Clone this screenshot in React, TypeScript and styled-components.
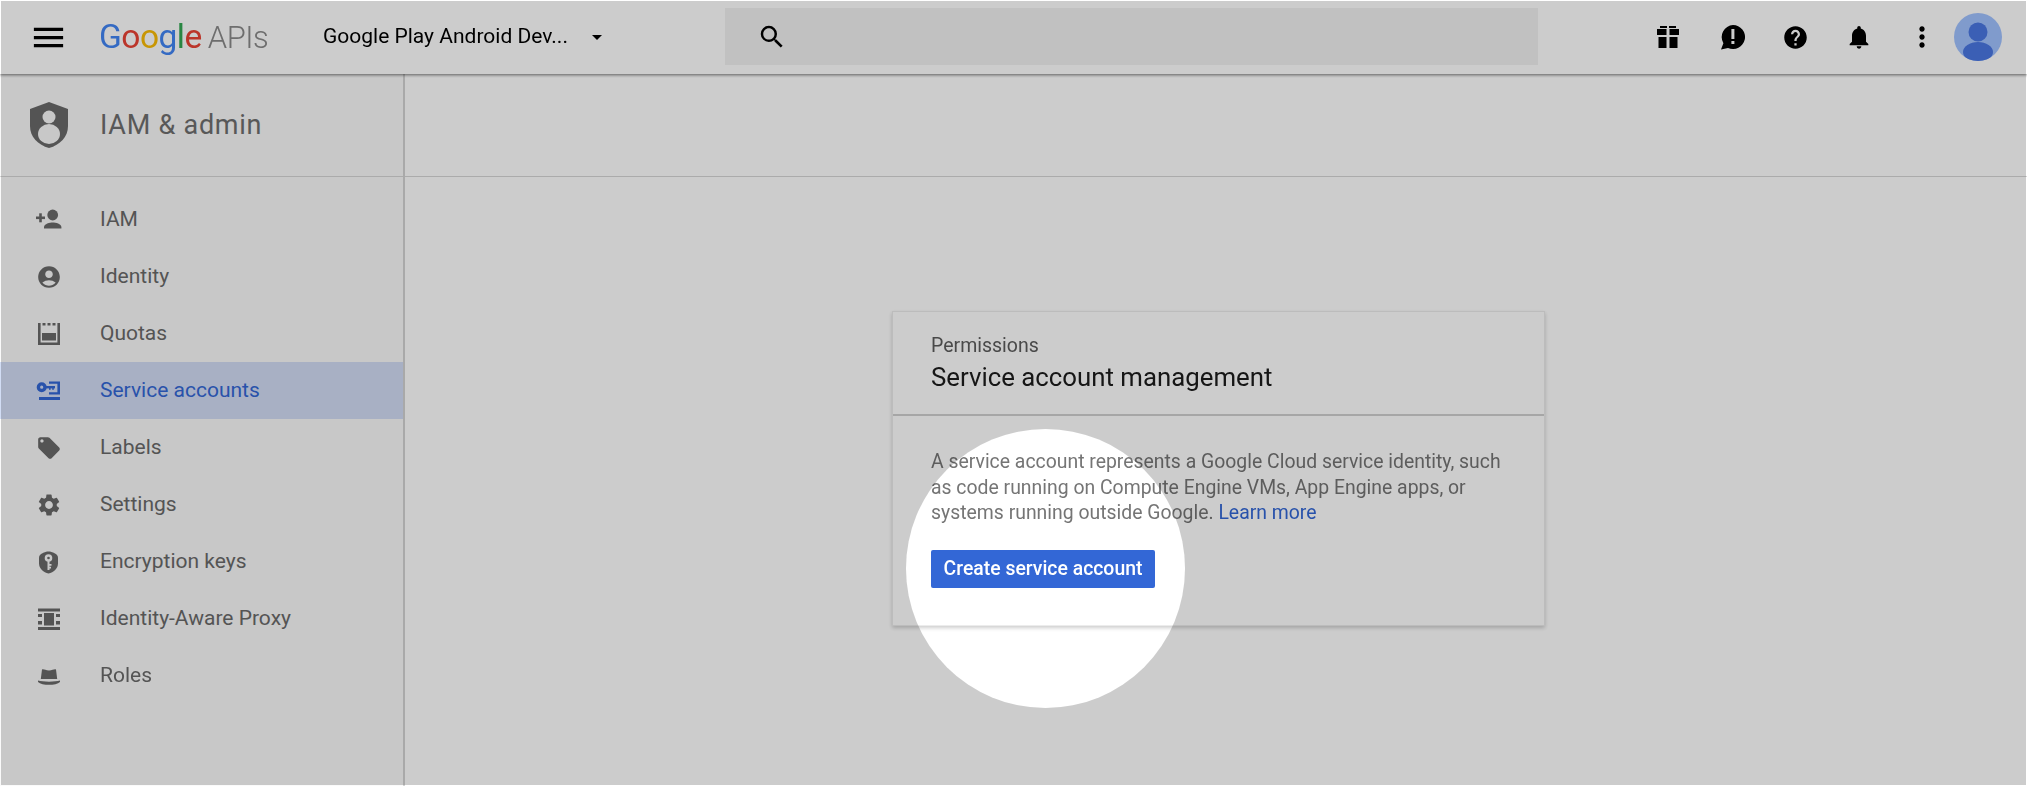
import React from "react";
import styled, { createGlobalStyle } from "styled-components";
import {
  MdAccountCircle,
  MdArrowDropDown,
  MdHelp,
  MdLocalOffer,
  MdMenu,
  MdMoreVert,
  MdNotifications,
  MdSearch,
  MdSettings,
} from "react-icons/md";

const GlobalStyle = createGlobalStyle`
  html, body {
    margin: 0;
    padding: 0;
    background: #fff;
  }
  body {
    font-family: Roboto, "Liberation Sans", sans-serif;
    overflow: hidden;
  }
`;

const Page = styled.div`
  position: relative;
  width: 2027px;
  height: 786px;
  display: flex;
  flex-direction: column;
  overflow: hidden;
  filter: blur(0.4px);
`;

const TopBar = styled.header`
  position: relative;
  z-index: 1;
  height: 74px;
  flex: none;
  display: flex;
  align-items: center;
  background: #fff;
  box-shadow: 0 1px 3px rgba(0, 0, 0, 0.55);
  padding-right: 25px;
`;

const MenuButton = styled.div`
  display: flex;
  margin-left: 29px;
  color: #000;
`;

const Logo = styled.div`
  margin-left: 31px;
  margin-top: -2px;
  width: 224px;
  font-size: 33.5px;
  letter-spacing: -0.5px;
  white-space: nowrap;
  font-weight: 400;
`;

const LogoLetter = styled.span<{ $color: string }>`
  color: ${(p) => p.$color};
`;

const LogoSuffix = styled.span`
  margin-left: 6px;
  font-size: 31px;
  font-weight: 300;
  color: #8a8a8a;
`;

const ProjectName = styled.div`
  width: 262px;
  margin-top: -2px;
  font-size: 21px;
  color: #000;
  white-space: nowrap;
`;

const Caret = styled.div`
  display: flex;
  width: 140px;
  color: #000;
`;

const SearchBox = styled.div`
  width: 813px;
  height: 57px;
  display: flex;
  align-items: center;
  padding-left: 32px;
  box-sizing: border-box;
  background: #f2f2f2;
  color: #000;
  margin-top: -1px;
`;

const Actions = styled.div`
  margin-left: auto;
  display: flex;
  align-items: center;
`;

const ActionIcon = styled.div`
  width: 63.5px;
  display: flex;
  justify-content: center;
  color: #000;
`;

const Avatar = styled.div`
  width: 48px;
  height: 48px;
  border-radius: 50%;
  overflow: hidden;
  background: #a1c2ff;
  margin-top: -1px;
  svg {
    display: block;
  }
`;

const Body = styled.div`
  flex: 1;
  display: flex;
  min-height: 0;
`;

const Sidebar = styled.aside`
  width: 405px;
  flex: none;
  box-sizing: border-box;
  background: #fafafa;
  border-right: 2px solid #d4d4d4;
`;

const SidebarHead = styled.div`
  height: 103px;
  box-sizing: border-box;
  display: flex;
  align-items: center;
  padding-left: 30px;
  border-bottom: 1px solid #d6d6d6;
  color: #6b6b6b;
`;

const SidebarTitle = styled.div`
  margin-left: 32px;
  font-size: 27px;
  letter-spacing: 0.75px;
  color: #6f6f6f;
`;

const NavList = styled.nav`
  padding-top: 14px;
`;

const NavItem = styled.div<{ $active?: boolean }>`
  height: 57px;
  display: flex;
  align-items: center;
  padding-left: 36px;
  font-size: 21px;
  color: ${(p) => (p.$active ? "#3367d6" : "#6a6a6a")};
  background: ${(p) => (p.$active ? "#d2ddf5" : "transparent")};
`;

const NavIcon = styled.span`
  width: 64px;
  flex: none;
  display: flex;
`;

const NavLabel = styled.span`
  margin-top: -2px;
`;

const Content = styled.main`
  flex: 1;
  display: flex;
  flex-direction: column;
`;

const ContentHead = styled.div`
  height: 103px;
  flex: none;
  box-sizing: border-box;
  border-bottom: 1px solid #d6d6d6;
`;

const ContentBody = styled.div`
  flex: 1;
  padding: 134px 0 0 487px;
`;

const Card = styled.section`
  width: 653px;
  height: 315px;
  box-sizing: border-box;
  background: #fff;
  border: 1px solid #ececec;
  box-shadow: 0 2px 4px rgba(0, 0, 0, 0.2);
`;

const CardHead = styled.div`
  height: 104px;
  box-sizing: border-box;
  padding: 24px 38px 0;
  border-bottom: 2px solid #d0d0d0;
`;

const Eyebrow = styled.div`
  font-size: 19.5px;
  line-height: 20px;
  color: #5c5c5c;
`;

const CardTitle = styled.div`
  margin-top: 6px;
  font-size: 25.8px;
  line-height: 30px;
  color: #1c1c1c;
`;

const CardBody = styled.div`
  padding: 33px 38px 0;
`;

const Description = styled.p`
  margin: 0;
  font-size: 19.4px;
  line-height: 25.5px;
  color: #757575;
`;

const LearnMore = styled.a`
  color: #3367d6;
  text-decoration: none;
`;

const PrimaryButton = styled.button`
  display: block;
  margin-top: 24px;
  width: 224px;
  height: 38px;
  padding: 0;
  border: 0;
  border-radius: 2px;
  background: #3367d6;
  color: #fff;
  font: 500 19.4px Roboto, sans-serif;
`;

const Scrim = styled.div`
  position: absolute;
  inset: 1px;
  z-index: 2;
  overflow: hidden;
  pointer-events: none;
`;

const Spotlight = styled.div`
  position: absolute;
  left: 905px;
  top: 428px;
  width: 279px;
  height: 279px;
  border-radius: 50%;
  box-shadow: 0 0 0 3000px rgba(0, 0, 0, 0.2);
`;

const Glyph = ({ children }: { children: React.ReactNode }) => (
  <svg width="26" height="26" viewBox="0 0 26 26" fill="currentColor">
    {children}
  </svg>
);

const items: { label: string; icon: React.ReactNode; active?: boolean }[] = [
  {
    label: "IAM",
    icon: (
      <Glyph>
        <rect x="0" y="9.5" width="9" height="2.6" />
        <rect x="3.2" y="6.3" width="2.6" height="9" />
        <circle cx="16.7" cy="8" r="5.4" />
        <path d="M8 21.5V20c0-3.2 5.8-4.6 8.7-4.6s8.7 1.4 8.7 4.6v1.5z" />
      </Glyph>
    ),
  },
  { label: "Identity", icon: <MdAccountCircle size={26} /> },
  {
    label: "Quotas",
    icon: (
      <Glyph>
        <path d="M2 2h2.6v19.4h16.8V2H24v22H2z" />
        <rect x="6.5" y="2" width="3" height="2.5" />
        <rect x="11.5" y="2" width="3" height="2.5" />
        <rect x="16.5" y="2" width="3" height="2.5" />
        <rect x="6" y="12" width="14" height="7.5" />
      </Glyph>
    ),
  },
  {
    label: "Service accounts",
    active: true,
    icon: (
      <Glyph>
        <path
          fillRule="evenodd"
          d="M5.7 4.2a5 5 0 1 1 0 10 5 5 0 0 1 0-10zm0 3.4a1.6 1.6 0 1 0 0 3.2 1.6 1.6 0 0 0 0-3.2z"
        />
        <rect x="10" y="8" width="9" height="2.4" />
        <rect x="13" y="10" width="1.6" height="1.8" />
        <rect x="16.2" y="10" width="1.6" height="1.8" />
        <path d="M13 3.5h11v13H13v-2.2h8.4V5.7H13z" />
        <rect x="3" y="19" width="21" height="3" />
      </Glyph>
    ),
  },
  { label: "Labels", icon: <MdLocalOffer size={26} /> },
  { label: "Settings", icon: <MdSettings size={26} /> },
  {
    label: "Encryption keys",
    icon: (
      <Glyph>
        <path d="M12.500 2.500c3.500 0 9.500 2.500 9.500 6v6c0 5-4.500 9-9.500 10-5-1-9.500-5-9.500-10v-6c0-3.500 6-6 9.500-6z" />
        <circle cx="12.500" cy="9" r="3.800" fill="#fafafa" />
        <circle cx="12.500" cy="9" r="1.300" />
        <path d="M11.500 12h2v3h2v1.800h-2v1h1.500v1.800h-1.500v1.400h-2z" fill="#fafafa" />
      </Glyph>
    ),
  },
  {
    label: "Identity-Aware Proxy",
    icon: (
      <Glyph>
        <rect x="2" y="2.500" width="22" height="3" />
        <rect x="2" y="21" width="22" height="3" />
        <rect x="8" y="7" width="10" height="12.500" />
        <rect x="2" y="8" width="4" height="3" />
        <rect x="2" y="15" width="4" height="3.500" />
        <rect x="20" y="8" width="4" height="3" />
        <rect x="20" y="15" width="4" height="3.500" />
      </Glyph>
    ),
  },
  {
    label: "Roles",
    icon: (
      <Glyph>
        <path d="M6 6.500c2-.6 3.500 1 7 1s5-1.600 7-1l1.200 9.500H4.800z" />
        <path d="M2 17.500c5 1.500 17 1.500 22 0v1.500c-4 3.800-18 3.800-22 0z" />
      </Glyph>
    ),
  },
];

export default function App() {
  return (
    <Page>
      <GlobalStyle />
      <TopBar>
        <MenuButton>
          <MdMenu size={39} />
        </MenuButton>
        <Logo>
          <LogoLetter $color="#4285f4">G</LogoLetter>
          <LogoLetter $color="#ea4335">o</LogoLetter>
          <LogoLetter $color="#fbbc05">o</LogoLetter>
          <LogoLetter $color="#4285f4">g</LogoLetter>
          <LogoLetter $color="#34a853">l</LogoLetter>
          <LogoLetter $color="#ea4335">e</LogoLetter>
          <LogoSuffix>APIs</LogoSuffix>
        </Logo>
        <ProjectName>Google Play Android Dev...</ProjectName>
        <Caret>
          <MdArrowDropDown size={24} />
        </Caret>
        <SearchBox>
          <MdSearch size={30} />
        </SearchBox>
        <Actions>
          <ActionIcon>
            <svg width="22" height="22" viewBox="0 0 22 22" fill="currentColor">
              <rect x="3" y="0" width="7" height="2" />
              <rect x="12" y="0" width="7" height="2" />
              <rect x="0" y="3" width="9.500" height="6" />
              <rect x="12.500" y="3" width="9.500" height="6" />
              <rect x="1.500" y="11" width="8" height="11" />
              <rect x="12.500" y="11" width="8" height="11" />
            </svg>
          </ActionIcon>
          <ActionIcon>
            <svg width="26" height="26" viewBox="0 0 26 26" fill="currentColor">
              <path d="M14 1a12 12 0 1 1-5 22.900L2 25.500l2.400-6.300A12 12 0 0 1 14 1z" />
              <rect x="12.400" y="5" width="3" height="10" fill="#fff" />
              <rect x="12.400" y="17" width="3" height="3" fill="#fff" />
            </svg>
          </ActionIcon>
          <ActionIcon>
            <MdHelp size={27} />
          </ActionIcon>
          <ActionIcon>
            <MdNotifications size={28} />
          </ActionIcon>
          <ActionIcon>
            <MdMoreVert size={32} />
          </ActionIcon>
          <Avatar>
            <svg width="48" height="48" viewBox="0 0 48 48" fill="#4a77e3">
              <circle cx="24" cy="19" r="9.500" />
              <ellipse cx="24" cy="39" rx="15" ry="10" />
            </svg>
          </Avatar>
        </Actions>
      </TopBar>
      <Body>
        <Sidebar>
          <SidebarHead>
            <svg width="38" height="46" viewBox="0 0 38 46">
              <path
                fill="#6a6a6a"
                d="M19 0l19 7v17c0 11-8 19-19 22C8 43 0 35 0 24V7z"
              />
              <circle cx="19" cy="15" r="6.500" fill="#fafafa" />
              <ellipse cx="19" cy="32" rx="11" ry="10" fill="#fafafa" />
            </svg>
            <SidebarTitle>IAM &amp; admin</SidebarTitle>
          </SidebarHead>
          <NavList>
            {items.map((item) => (
              <NavItem key={item.label} $active={item.active}>
                <NavIcon>{item.icon}</NavIcon>
                <NavLabel>{item.label}</NavLabel>
              </NavItem>
            ))}
          </NavList>
        </Sidebar>
        <Content>
          <ContentHead />
          <ContentBody>
            <Card>
              <CardHead>
                <Eyebrow>Permissions</Eyebrow>
                <CardTitle>Service account management</CardTitle>
              </CardHead>
              <CardBody>
                <Description>
                  A service account represents a Google Cloud service identity,
                  such as code running on Compute Engine VMs, App Engine apps,
                  or systems running outside Google.{" "}
                  <LearnMore>Learn more</LearnMore>
                </Description>
                <PrimaryButton>Create service account</PrimaryButton>
              </CardBody>
            </Card>
          </ContentBody>
        </Content>
      </Body>
      <Scrim>
        <Spotlight />
      </Scrim>
    </Page>
  );
}
